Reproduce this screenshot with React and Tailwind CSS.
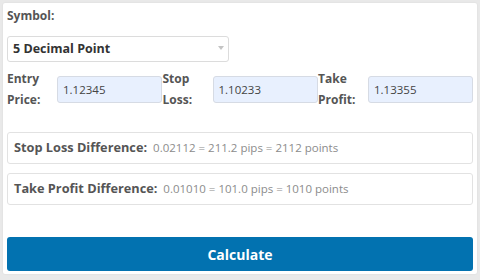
import React, { useState } from "react";

const font = { fontFamily: '"Open Sans", "Liberation Sans", sans-serif' };

function Field({ label, value }) {
  const [lineA, lineB] = label;
  return (
    <div className="flex items-center w-[155px]">
      <label className="w-[50px] text-[12px] font-bold leading-[21px] text-[#555]">
        {lineA}
        <br />
        {lineB}
      </label>
      <input
        type="text"
        defaultValue={value}
        className="w-[105px] h-[27px] rounded-[3px] border border-[#d6dbe4] bg-[#e8f0fe] px-[5px] text-[11.5px] text-[#444] outline-none"
      />
    </div>
  );
}

export default function App() {
  const [symbol, setSymbol] = useState("5");

  return (
    <div className="w-[480px] h-[280px] bg-[#e9e9e9] p-[3px]" style={font}>
      <div className="h-[271px] bg-white rounded-[2px] px-[4px] pt-[2px] shadow-[0_0_2px_rgba(0,0,0,0.08)]">
        <div className="h-[22px] flex items-center text-[12px] font-bold text-[#555]">Symbol:</div>

        <div className="relative mt-[8px] w-[222px] h-[26px]">
          <select
            value={symbol}
            onChange={e => setSymbol(e.target.value)}
            className="appearance-none w-full h-full rounded-[3px] border border-[#dcdcdc] bg-white pl-[5px] text-[12.5px] font-bold text-[#333] outline-none"
          >
            <option value="5">5 Decimal Point</option>
            <option value="3">3 Decimal Point</option>
            <option value="2">2 Decimal Point</option>
          </select>
          <span className="absolute right-[5px] top-[11px] w-0 h-0 border-l-[3px] border-r-[3px] border-t-[4px] border-l-transparent border-r-transparent border-t-[#c4c4c4]" />
        </div>

        <div className="mt-[7px] h-[42px] flex items-center justify-between">
          <Field label={["Entry", "Price:"]} value="1.12345" />
          <Field label={["Stop", "Loss:"]} value="1.10233" />
          <Field label={["Take", "Profit:"]} value="1.13355" />
        </div>

        <div className="mt-[22px] h-[32px] flex items-center rounded-[3px] border border-[#e2e2e2] px-[6px]">
          <span className="text-[12.75px] font-bold text-[#555]">Stop Loss Difference:</span>
          <span className="ml-[6px] text-[11.5px] text-[#8c8c8c]">0.02112 = 211.2 pips = 2112 points</span>
        </div>

        <div className="mt-[9px] h-[32px] flex items-center rounded-[3px] border border-[#e2e2e2] px-[6px]">
          <span className="text-[12.75px] font-bold text-[#555]">Take Profit Difference:</span>
          <span className="ml-[6px] text-[11.5px] text-[#8c8c8c]">0.01010 = 101.0 pips = 1010 points</span>
        </div>

        <button className="mt-[32px] w-full h-[34px] rounded-[3px] bg-[#0272b0] text-white text-[14px] font-bold">
          Calculate
        </button>
      </div>
    </div>
  );
}
